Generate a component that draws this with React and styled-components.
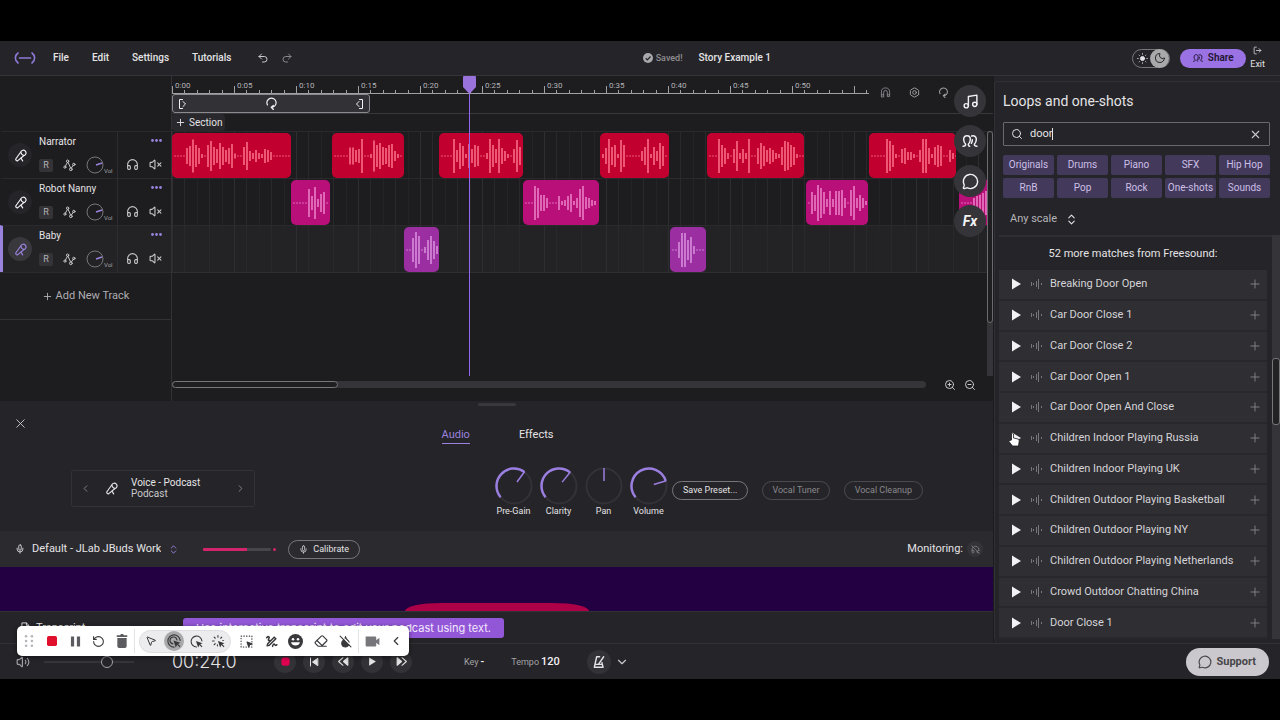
import React, { useState } from 'react';
import styled, { createGlobalStyle, css } from 'styled-components';
import {
  Bolt,
  ChevronDown,
  ChevronLeft,
  ChevronRight,
  ChevronsUpDown,
  DropletOff,
  Eraser,
  Headphones,
  HeadphoneOff,
  LogOut,
  MessageCircle,
  Mic,
  Moon,
  MousePointer2,
  Music,
  Plus,
  Redo2,
  RotateCcw,
  Search,
  Undo2,
  Volume2,
  VolumeX,
  X,
  ZoomIn,
  ZoomOut,
} from 'lucide-react';

const GlobalStyle = createGlobalStyle`
  * {
    box-sizing: border-box;
  }

  body {
    margin: 0;
    background: #000;
    color: #e4e3e6;
    font: 400 11px/14px Roboto, 'Liberation Sans', sans-serif;
  }

  button, input, select {
    margin: 0;
    padding: 0;
    border: 0;
    background: none;
    color: inherit;
    font: inherit;
    outline: none;
  }

  svg {
    display: block;
    flex-shrink: 0;
  }
`;

const Page = styled.div`
  display: flex;
  flex-direction: column;
  min-height: 100vh;
  padding: 41px 0;
  background: #000;
`;

const Studio = styled.div`
  position: relative;
  display: flex;
  flex: 1;
  flex-direction: column;
  background: #252428;
`;

const HiddenInput = styled.input`
  position: absolute;
  width: 1px;
  height: 1px;
  opacity: 0;
`;

/* top bar */

const TopBar = styled.header`
  display: flex;
  align-items: center;
  justify-content: space-between;
  height: 35px;
  padding: 0 15px 0 14px;
  border-bottom: 1px solid #353438;
`;

const Menu = styled.nav`
  display: flex;
  align-items: center;
  gap: 23px;
  font-size: 10px;
  font-weight: 500;
`;

const IconButton = styled.button`
  display: flex;
  align-items: center;
  justify-content: center;
  color: ${(props) => props.$color || '#c9c8cb'};
`;

const LogoLink = styled.a`
  margin-right: -6px;
`;

const MenuIcons = styled.div`
  display: flex;
  gap: 12px;
  margin-left: 3px;
`;

const Project = styled.div`
  display: flex;
  align-items: center;
  gap: 16px;
  margin-right: 12px;
  font-size: 10px;
  font-weight: 500;
`;

const Saved = styled.span`
  display: flex;
  align-items: center;
  gap: 3px;
  color: #8f8e92;
  font-size: 9px;
`;

const Account = styled.div`
  display: flex;
  align-items: center;
  justify-content: flex-end;
  gap: 10px;
`;

const ThemeSwitch = styled.label`
  display: flex;
  align-items: center;
  justify-content: space-between;
  width: 38px;
  height: 19px;
  padding-left: 4px;
  border: 1px solid #77767a;
  border-radius: 10px;
`;

const ThemeThumb = styled.span`
  display: flex;
  align-items: center;
  justify-content: center;
  width: 19px;
  height: 19px;
  border-radius: 50%;
  background: #a9a8ab;
  color: #252428;
`;

const ShareButton = styled.button`
  display: flex;
  align-items: center;
  justify-content: center;
  gap: 5px;
  width: 66px;
  height: 19px;
  border-radius: 10px;
  background: #9a72e4;
  color: #1e1430;
  font-size: 10px;
  font-weight: 600;
`;

const ExitLink = styled.a`
  display: flex;
  flex-direction: column;
  align-items: center;
  gap: 3px;
  margin-left: -6px;
  color: #e4e3e6;
  font-size: 9px;
  line-height: 12px;
  text-decoration: none;
`;

/* workspace */

const Workspace = styled.div`
  display: flex;
  flex: 1;
`;

const Editor = styled.main`
  display: flex;
  flex: 1;
  flex-direction: column;
  min-width: 0;
  border-right: 1px solid #1b1a1d;
`;

const Timeline = styled.section`
  display: flex;
  flex: 1;
  background: #1d1c1f;
`;

const HeadColumn = styled.div`
  flex: 0 0 172px;
  padding-top: 55px;
  border-right: 1px solid #323135;
`;

const rowBox = css`
  height: 47px;
  border-top: 1px solid #2a292c;
`;

const TrackHead = styled.div`
  ${rowBox}
  display: flex;
  align-items: stretch;
  border-left: 3px solid ${(props) => (props.$active ? '#9a83df' : 'transparent')};
  background: ${(props) => (props.$active ? '#232225' : 'transparent')};
`;

const TrackAvatar = styled.button`
  display: flex;
  align-self: center;
  align-items: center;
  justify-content: center;
  width: 24px;
  height: 24px;
  margin: 0 7px 0 5px;
  border-radius: 50%;
  background: ${(props) => (props.$active ? '#39383c' : '#252428')};
  color: ${(props) => (props.$active ? '#9a83df' : '#f2f1f4')};
`;

const TrackInfo = styled.div`
  flex: 1;
  padding-top: 3px;
  font-size: 10px;
`;

const TrackControls = styled.div`
  display: flex;
  align-items: center;
  gap: 10px;
  height: 18px;
  margin-top: 7px;
`;

const RecordArm = styled.button`
  width: 14px;
  height: 13px;
  border-radius: 2px;
  background: #343337;
  color: #b3b2b6;
  font-size: 9px;
  line-height: 13px;
`;

const VolLabel = styled.label`
  display: flex;
  align-items: flex-end;
  color: #a3a2a6;
  font-size: 6px;
  line-height: 6px;
`;

const TrackSide = styled.div`
  display: flex;
  flex: 0 0 54px;
  flex-direction: column;
  align-items: flex-end;
  padding: 7px 9px 0 8px;
  border-left: 1px solid #2d2c30;
`;

const TrackSideIcons = styled.div`
  display: flex;
  align-items: center;
  justify-content: space-between;
  width: 100%;
  height: 14px;
  margin-top: 15px;
`;

const AddTrack = styled.button`
  ${rowBox}
  display: flex;
  align-items: center;
  justify-content: center;
  gap: 3px;
  width: 100%;
  height: 48px;
  border-bottom: 1px solid #323135;
  color: #aeadb1;
  font-size: 11px;
`;

const LaneColumn = styled.div`
  position: relative;
  display: flex;
  flex: 1;
  flex-direction: column;
  min-width: 0;
`;

const RulerRow = styled.div`
  display: flex;
  height: 38px;
  border-bottom: 1px solid #38373b;
`;

const RulerBlock = styled.div`
  flex: 0 1 697px;
  min-width: 0;
`;

const Ruler = styled.div`
  display: flex;
  height: 18px;
  overflow: hidden;
  border-bottom: 1px solid #a09fa3;
`;

const Mark = styled.div`
  position: relative;
  display: flex;
  flex: 0 0 62px;
  align-items: flex-end;
`;

const MarkLabel = styled.span`
  position: absolute;
  top: 5px;
  left: 3px;
  color: #b5b4b8;
  font-size: 8px;
  line-height: 10px;
`;

const Tick = styled.span`
  flex: 1;
  height: ${(props) => (props.$major ? 7 : 3)}px;
  border-left: 1px solid #a09fa3;
`;

const LoopRange = styled.div`
  display: flex;
  align-items: center;
  justify-content: space-between;
  width: 198px;
  height: 19px;
  padding: 0 4px;
  border: 1px solid #8b8a8e;
  border-radius: 3px;
  background: #323135;
  color: #f2f1f4;
`;

const RulerTools = styled.div`
  display: flex;
  align-items: center;
  gap: 18px;
  height: 33px;
  padding-left: 11px;
`;

const SectionButton = styled.button`
  display: flex;
  align-self: flex-start;
  align-items: center;
  gap: 3px;
  height: 17px;
  padding: 0 3px;
  border-radius: 4px;
  background: #29282c;
  font-size: 10px;
`;

const Lanes = styled.div`
  display: flex;
  flex: 1;
`;

const LaneStack = styled.div`
  flex: 1;
  min-width: 0;
  overflow: hidden;
`;

const Lane = styled.div`
  ${rowBox}
  position: relative;
  background-color: ${(props) => (props.$active ? '#232225' : '#1d1c1f')};
  background-image: repeating-linear-gradient(
    90deg,
    #2e2d31 0 1px,
    transparent 1px 12px,
    #29282b 12px 13px,
    transparent 13px 25px,
    #242326 25px 26px,
    transparent 26px 37px,
    #29282b 37px 38px,
    transparent 38px 50px,
    #242326 50px 51px,
    transparent 51px 62px
  );

  &:last-child {
    height: 48px;
    border-bottom: 1px solid #2f2e32;
  }
`;

const Clip = styled.div`
  position: absolute;
  top: 1px;
  bottom: 0;
  display: flex;
  align-items: center;
  padding-left: 2px;
  overflow: hidden;
  border-radius: 5px;
  background: ${(props) => props.$fill};
  color: ${(props) => props.$wave};
`;

const VerticalScroll = styled.div`
  width: 6px;
  background: #353438;
`;

const VerticalThumb = styled.div`
  height: 192px;
  border: 1px solid #6c6b6f;
  border-radius: 3px;
  background: #1f1e21;
`;

const ScrollRow = styled.div`
  display: flex;
  align-items: center;
  height: 25px;
  padding-bottom: 8px;
  gap: 8px;
`;

const HorizontalScroll = styled.div`
  flex: 1;
  margin-right: 10px;
  border-radius: 4px;
  background: #353438;
`;

const HorizontalThumb = styled.div`
  width: 22%;
  height: 7px;
  border: 1px solid #77767a;
  border-radius: 4px;
  background: #1f1e21;
`;

const ZoomButtons = styled.div`
  display: flex;
  gap: 8px;
  margin-right: 17px;
`;

const Playhead = styled.div`
  position: absolute;
  top: 0;
  bottom: 25px;
  display: flex;
  flex-direction: column;
  align-items: center;
  width: 13px;

  &::after {
    content: '';
    flex: 1;
    width: 1px;
    background: #9068ee;
  }
`;

const Dock = styled.div`
  position: absolute;
  top: 9px;
  right: 7px;
  display: flex;
  flex-direction: column;
  gap: 8px;
`;

const DockButton = styled.button`
  display: flex;
  align-items: center;
  justify-content: center;
  width: 32px;
  height: 32px;
  border-radius: 50%;
  background: #353438;
  color: #f2f1f4;
  font-size: 14px;
  font-style: italic;
  font-weight: 700;
`;

/* track settings */

const TrackPanel = styled.section`
  height: 130px;
`;

const Handle = styled.div`
  width: 38px;
  height: 3px;
  margin: 2px auto 0;
  border-radius: 2px;
  background: #39383c;
`;

const TabRow = styled.div`
  display: grid;
  grid-template-columns: 1fr auto 1fr;
  align-items: start;
  padding: 10px 11px 0 13px;
`;

const Tabs = styled.div`
  display: flex;
  gap: 49px;
  margin-top: 11px;
`;

const Tab = styled.button`
  height: 17px;
  border-bottom: 1px solid ${(props) => (props.$active ? '#9a83df' : 'transparent')};
  color: ${(props) => (props.$active ? '#9a83df' : '#e4e3e6')};
`;

const ControlsRow = styled.div`
  display: flex;
  align-items: center;
  height: 54px;
  margin-top: 17px;
  padding-left: 71px;
`;

const Preset = styled.div`
  display: flex;
  align-items: center;
  width: 184px;
  height: 37px;
  margin-right: 236px;
  padding: 0 8px;
  border: 1px solid #323135;
  border-radius: 2px;
  font-size: 10px;
  line-height: 11px;
`;

const PresetName = styled.div`
  flex: 1;
  margin-left: 13px;

  div:last-child {
    color: #c9c8cb;
  }
`;

const PresetIcon = styled.div`
  margin-left: 14px;
`;

const Knob = styled.label`
  display: flex;
  flex-direction: column;
  align-items: center;
  width: 45px;
  margin-top: 8px;
  font-size: 9px;
  line-height: 12px;
`;

const PillRow = styled.div`
  display: flex;
  gap: 14px;
  margin: 4px 0 0 1px;
`;

const Pill = styled.button`
  display: flex;
  align-items: center;
  gap: 5px;
  height: 19px;
  padding: 0 ${(props) => (props.$wide ? 10 : 9)}px;
  border: 1px solid ${(props) => (props.$muted ? '#4b4a4e' : '#77767a')};
  border-radius: 10px;
  color: ${(props) => (props.$muted ? '#89888c' : '#e4e3e6')};
  font-size: 9px;
  white-space: nowrap;
`;

const MicBar = styled.section`
  display: flex;
  align-items: center;
  height: 36px;
  padding: 0 10px 0 15px;
  background: #2b2a2e;
`;

const Device = styled.label`
  display: flex;
  align-items: center;
  gap: 7px;
  margin-right: 24px;
`;

const PlainSelect = styled.select`
  appearance: none;
  field-sizing: content;
`;

const Level = styled.div`
  display: flex;
  align-items: center;
  width: 73px;
  gap: 2px;
  margin-right: 12px;
`;

const LevelTrack = styled.div`
  flex: 1;
  height: 3px;
  border-radius: 1px;
  background: linear-gradient(90deg, #d4246b 64%, #47464a 64%);
`;

const LevelPeak = styled.span`
  width: 3px;
  height: 3px;
  border-radius: 50%;
  background: #d4246b;
`;

const Monitoring = styled.div`
  display: flex;
  align-items: center;
  gap: 4px;
  margin-left: auto;
`;

const MonitorButton = styled(IconButton)`
  width: 16px;
  height: 16px;
  border-radius: 50%;
  background: #343337;
`;

const VideoStrip = styled.div`
  display: flex;
  align-items: flex-end;
  justify-content: center;
  height: 44px;
  background: #230041;
`;

const VideoShape = styled.div`
  width: 184px;
  height: 8px;
  border-radius: 36px 36px 0 0 / 8px 8px 0 0;
  background: #ad0046;
`;

const TranscriptRow = styled.section`
  display: flex;
  align-items: center;
  height: 32px;
  padding-left: 20px;
  border-top: 1px solid #323135;
`;

const TranscriptTab = styled.button`
  display: flex;
  align-items: center;
  gap: 5px;
  width: 163px;
`;

const Banner = styled.p`
  margin: 1px 0 0;
  padding: 3px 13px;
  border-radius: 3px;
  background: #9257d6;
  color: #f2e8ff;
  font-family: Inter, sans-serif;
`;

/* library */

const Library = styled.aside`
  display: flex;
  flex: 0 0 286px;
  flex-direction: column;
  align-self: stretch;
  margin: 5px 0 4px;
  border: 1px solid #313034;
  border-width: 1px 0 0 1px;
  border-radius: 3px 0 0 0;
`;

const LibraryTop = styled.div`
  padding: 11px 10px 0 8px;
`;

const LibraryTitle = styled.h2`
  margin: 0 0 13px;
  font-size: 14px;
  font-weight: 400;
  line-height: 16px;
`;

const SearchBox = styled.label`
  display: flex;
  align-items: center;
  height: 24px;
  padding: 0 7px;
  border: 1px solid #69686c;
  border-radius: 1px;
`;

const SearchInput = styled.input`
  field-sizing: content;
  margin-left: 7px;
`;

const Caret = styled.span`
  width: 1px;
  height: 12px;
  margin-right: auto;
  background: #e4e3e6;
`;

const Tags = styled.div`
  display: grid;
  grid-template-columns: repeat(5, 1fr);
  gap: 3px;
  margin-top: 9px;
`;

const Tag = styled.button`
  height: 20px;
  border-radius: 2px;
  background: #433a5b;
  color: #cdbfe8;
  font-size: 10px;
  white-space: nowrap;
`;

const Scale = styled.label`
  display: flex;
  align-items: center;
  gap: 8px;
  height: 32px;
  margin-top: 5px;
  padding-left: 7px;
  color: #b5b4b8;
`;

const Results = styled.div`
  display: flex;
  flex: 1;
  margin-left: 4px;
`;

const ResultsBody = styled.div`
  display: flex;
  flex: 1;
  flex-direction: column;
  border-top: 2px solid #2f2e32;
`;

const ResultsTitle = styled.h3`
  margin: 0;
  padding: 10px 5px 9px 0;
  font-size: 11px;
  font-weight: 400;
  line-height: 14px;
  text-align: center;
`;

const ResultList = styled.ul`
  display: flex;
  flex: 1;
  flex-direction: column;
  margin: 0 5px 0 0;
  padding: 0;
  list-style: none;
`;

const ResultRow = styled.li`
  position: relative;
  display: flex;
  flex: 1;
  align-items: center;
  padding: 0 5px 0 13px;
  border-bottom: 2px solid #28272b;
  background: #2f2e32;
  color: #d5d4d8;
`;

const ResultName = styled.span`
  flex: 1;
  margin-left: 8px;
  white-space: nowrap;
`;

const ResultWave = styled.span`
  margin-left: 10px;
`;

const HandCursor = styled.svg`
  position: absolute;
  top: 8px;
  left: 9px;
`;

const LibraryScroll = styled.div`
  display: flex;
  flex-direction: column;
  align-items: stretch;
  width: 8px;
  background: #353438;
`;

const LibraryThumb = styled.div`
  height: 67px;
  margin-top: 123px;
  border: 1px solid #77767a;
  border-radius: 3px;
  background: #222124;
`;

/* transport */

const Transport = styled.footer`
  display: flex;
  align-items: center;
  height: 36px;
  padding: 0 11px 0 16px;
  border-top: 1px solid #323135;
`;

const VolumeSlider = styled.input`
  appearance: none;
  width: 90px;
  height: 12px;
  margin: 0 38px 0 14px;

  &::-webkit-slider-runnable-track {
    height: 2px;
    background: #353438;
  }

  &::-webkit-slider-thumb {
    appearance: none;
    width: 12px;
    height: 12px;
    margin-top: -5px;
    border: 1px solid #a3a2a6;
    border-radius: 50%;
    background: #252428;
  }
`;

const Clock = styled.time`
  width: 102px;
  font: 300 18px/22px Inter, sans-serif;
`;

const TransportButtons = styled.div`
  display: flex;
  gap: 7px;
  margin-right: 52px;
`;

const RoundButton = styled.button`
  display: flex;
  align-items: center;
  justify-content: center;
  width: ${(props) => props.$size || 22}px;
  height: ${(props) => props.$size || 22}px;
  border-radius: 50%;
  background: #333236;
  color: #e4e3e6;
`;

const Setting = styled.label`
  display: flex;
  align-items: center;
  gap: 2px;
  margin-right: 27px;
  color: #a3a2a6;
  font-size: 9px;

  input, output {
    color: #f2f1f4;
    font-size: 11px;
    font-weight: 500;
    field-sizing: content;
  }
`;

const Support = styled.button`
  display: flex;
  align-items: center;
  gap: 4px;
  height: 28px;
  margin-left: auto;
  padding: 0 13px 0 12px;
  border-radius: 14px;
  background: #cac8cc;
  color: #47464a;
  font: 700 11px/14px Roboto, sans-serif;
`;

/* floating recorder */

const Recorder = styled.div`
  position: absolute;
  bottom: 23px;
  left: 17px;
  display: flex;
  align-items: center;
  width: 392px;
  height: 30px;
  border-radius: 5px;
  background: #fff;
  color: #39383c;
  box-shadow: 0 1px 4px rgba(0, 0, 0, 0.5);
`;

const RecorderButton = styled.button`
  display: flex;
  flex: 1;
  align-items: center;
  justify-content: center;
  height: 20px;
  color: ${(props) => props.$color || '#39383c'};
`;

const RecorderGroup = styled.div`
  display: flex;
  flex: ${(props) => props.$grow};
  align-items: center;
  padding: 0 ${(props) => props.$pad || 0}px;
`;

const PointerGroup = styled.div`
  display: flex;
  align-items: center;
  width: 92px;
  height: 23px;
  margin: 0 3px 0 4px;
  border: 1px solid #dddce0;
  border-radius: 12px;
  background: #ececee;
`;

const Selected = styled.span`
  display: flex;
  align-items: center;
  justify-content: center;
  width: 20px;
  height: 20px;
  border-radius: 50%;
  background: #a9a8ab;
`;

const RecorderDivider = styled.span`
  width: 1px;
  height: 24px;
  background: #e3e2e5;
`;

/* icons */

const Svg = ({ size = 14, stroke = 2, fill = 'none', children }) => (
  <svg
    width={size}
    height={size}
    viewBox="0 0 24 24"
    fill={fill}
    stroke="currentColor"
    strokeWidth={stroke}
    strokeLinecap="round"
    strokeLinejoin="round"
    aria-hidden="true"
  >
    {children}
  </svg>
);

const LogoIcon = () => (
  <svg width="22" height="12" viewBox="0 0 22 12" fill="none" stroke="#8f79d8" strokeWidth="1.6" strokeLinecap="round" aria-hidden="true">
    <path d="M4 1C0.5 3.5 0.500 8.5 4 11M18 1c3.500 2.500 3.500 7.500 0 10M5.500 6h11" />
  </svg>
);

const VocalIcon = ({ size }) => (
  <Svg size={size} stroke={2.200}>
    <path d="M12.500 5.500a5 5 0 1 1 6 6.500L7 21.500c-2 1-4.500-1-3.500-3.500z" />
    <path d="M12.500 5.500c.5 3.500 2.500 5.500 6 6.500M13 17l3 5" />
  </Svg>
);

const PeopleIcon = ({ size }) => (
  <Svg size={size} stroke={2.200}>
    <path d="M1.500 20c2.500 0 4-1 4-3C3.500 15 2.500 12.500 2.500 9.500 2.500 6 4.500 4 7.500 4s5 2 5 5.500c0 3-1 5.500-3 7.500 0 1.500.5 3 2 3" />
    <path d="M14.500 4.500c4-1.500 7 1 7 5 0 3-1 5.500-3 7.500 0 2 1.500 3 4 3M15.500 10c0 2.500-.5 4-1.500 5.500" />
  </Svg>
);

const AutomationIcon = () => (
  <Svg size={13} stroke={1.800}>
    <circle cx="3.500" cy="15" r="2" />
    <circle cx="8.500" cy="4" r="2.200" />
    <circle cx="14.500" cy="19" r="2.500" />
    <circle cx="20" cy="10" r="2.200" />
    <path d="M4.500 13L8 6.500M9.500 6.500L14 16.500M15.500 16.500l3.500-5" />
  </Svg>
);

const LoopIcon = ({ size }) => (
  <Svg size={size} stroke={2.200}>
    <path d="M4.500 14.500A8.500 8.500 0 1 1 12.500 19M15.500 15.500l-4 3.500 4 4" />
  </Svg>
);

const MagnetIcon = () => (
  <Svg size={11}>
    <path d="M3 21V11a9 9 0 0 1 18 0v10h-5V11.500a4 4 0 0 0-8 0V21zM3 17h5M16 17h5" />
  </Svg>
);

const RangeStartIcon = () => (
  <Svg size={12}>
    <path d="M11 3H5v18h6M12 7l5 5-5 5" />
  </Svg>
);

const RangeEndIcon = () => (
  <Svg size={12}>
    <path d="M13 3h6v18h-6M12 7l-5 5 5 5" />
  </Svg>
);

const SavedIcon = () => (
  <svg width="10" height="10" viewBox="0 0 24 24" aria-hidden="true">
    <circle cx="12" cy="12" r="12" fill="#a9a8ab" />
    <path d="M6.500 12.500l4 4 7.500-8" fill="none" stroke="#252428" strokeWidth="3" />
  </svg>
);

const SunIcon = () => (
  <Svg size={11}>
    <circle cx="12" cy="12" r="4.500" fill="currentColor" />
    <path d="M12 1.500v1M12 21.500v1M1.500 12h1M21.500 12h1M4.600 4.600l.6.6M18.800 18.800l.6.6M4.600 19.400l.6-.6M18.800 5.200l.6-.6" />
  </Svg>
);

const DotsIcon = () => (
  <svg width="11" height="3" viewBox="0 0 11 3" fill="#9a83df" aria-hidden="true">
    <circle cx="1.500" cy="1.500" r="1.400" />
    <circle cx="5.500" cy="1.500" r="1.400" />
    <circle cx="9.500" cy="1.500" r="1.400" />
  </svg>
);

const PlayIcon = ({ width = 9, height = 12 }) => (
  <svg width={width} height={height} viewBox="0 0 9 12" fill="currentColor" aria-hidden="true">
    <path d="M0 0.500L9 6 0 11.500z" />
  </svg>
);

const SoundIcon = () => (
  <svg width="11" height="12" viewBox="0 0 11 12" stroke="#77767a" aria-hidden="true">
    <path d="M.5 4v4M2.500 5v2M5.500 3v6M7.500 1v10M10.500 5v2" />
  </svg>
);

const MetronomeIcon = () => (
  <Svg size={14} stroke={2.400}>
    <path d="M13 3H8L4 21h15l-2-8M6 16h11M11 16L20 3" />
  </Svg>
);

const pointer = 'M11 11l4 12 2.500-4.500 4 4 1.500-1.500-4-4 4-2z';

const VolDial = () => (
  <svg width="18" height="18" viewBox="0 0 18 18" fill="none" aria-hidden="true">
    <circle cx="9" cy="9" r="8" stroke="#77767a" />
    <path d="M10 9l6-2" stroke="#9a83df" strokeWidth="1.500" />
  </svg>
);

/* sweep runs clockwise from the lower left, 0 to 1 */
const KnobDial = ({ value, centered }) => {
  const at = (t, r) => {
    const a = ((-130 + t * 260) * Math.PI) / 180;
    return `${19 + r * Math.sin(a)} ${19 - r * Math.cos(a)}`;
  };
  return (
    <svg width="38" height="38" viewBox="0 0 38 38" fill="none" aria-hidden="true">
      <circle cx="19" cy="19" r="17.500" stroke="#333236" strokeWidth="2" />
      {!centered && (
        <path
          d={`M${at(0, 17.5)}A17.500 17.500 0 ${value * 260 > 180 ? 1 : 0} 1 ${at(value, 17.5)}`}
          stroke="#9a7ee0"
          strokeWidth="2.500"
        />
      )}
      <path d={`M${at(value, 5)}L${at(value, 18)}`} stroke="#9a7ee0" strokeWidth="1.500" />
    </svg>
  );
};

const Waveform = ({ bars }) => (
  <svg width={bars.length * 3} height="40" stroke="currentColor" strokeWidth="1.400" aria-hidden="true">
    {bars.map((h, i) => (
      <path key={i} d={`M${i * 3 + 1} ${20 - h / 2}v${h}`} />
    ))}
  </svg>
);

const marks = ['0:00', '0:05', '0:10', '0:15', '0:20', '0:25', '0:30', '0:35', '0:40', '0:45', '0:50', ''];

const tracks = [
  {
    name: 'Narrator',
    fill: '#c20030',
    wave: '#ff7d92',
    clips: [
      { x: 0, w: 119, bars: [1, 1, 1, 1, 16, 20, 33, 22, 16, 4, 1, 22, 30, 18, 14, 26, 18, 12, 16, 24, 5, 1, 1, 18, 28, 10, 6, 12, 6, 4, 14, 12, 8, 1, 1, 1, 1, 1, 1] },
      { x: 160, w: 72, bars: [1, 1, 1, 1, 1, 17, 17, 12, 14, 34, 1, 1, 4, 31, 22, 26, 18, 16, 22, 24, 10, 4, 1] },
      { x: 267, w: 84, bars: [1, 1, 1, 1, 34, 12, 26, 20, 4, 24, 14, 22, 20, 1, 1, 6, 34, 22, 14, 34, 16, 10, 4, 1, 14, 32, 18] },
      { x: 428, w: 69, bars: [4, 16, 34, 18, 22, 4, 32, 22, 1, 1, 1, 1, 1, 10, 18, 34, 4, 18, 10, 26, 20, 1] },
      { x: 535, w: 97, bars: [1, 1, 1, 34, 22, 16, 6, 1, 14, 30, 6, 14, 6, 34, 1, 1, 16, 26, 20, 12, 16, 12, 6, 4, 18, 30, 28, 22, 18, 4, 1, 1] },
      { x: 697, w: 87, bars: [1, 1, 1, 1, 1, 34, 30, 22, 4, 1, 14, 16, 8, 8, 4, 1, 12, 34, 34, 16, 4, 18, 22, 20, 1, 1, 12, 6, 1] },
    ],
  },
  {
    name: 'Robot Nanny',
    fill: '#b80f79',
    wave: '#f08fd0',
    clips: [
      { x: 119, w: 39, bars: [1, 1, 1, 1, 1, 28, 14, 32, 8, 18, 22, 1] },
      { x: 351, w: 76, bars: [1, 1, 1, 34, 30, 16, 16, 10, 1, 1, 1, 14, 4, 6, 14, 18, 4, 10, 28, 34, 12, 10, 6, 4] },
      { x: 634, w: 62, bars: [1, 22, 16, 36, 30, 22, 8, 24, 8, 24, 24, 26, 10, 1, 26, 34, 10, 16, 10, 4] },
      { x: 787, w: 40, bars: [1, 1, 1, 1, 10, 14, 16, 20, 24] },
    ],
  },
  {
    name: 'Baby',
    active: true,
    fill: '#9b2fa1',
    wave: '#e09ae4',
    clips: [
      { x: 232, w: 35, bars: [1, 1, 24, 36, 28, 1, 6, 20, 28, 18, 8] },
      { x: 498, w: 36, bars: [1, 1, 16, 34, 34, 20, 26, 8, 1, 1, 1] },
    ],
  },
];

const tags = ['Originals', 'Drums', 'Piano', 'SFX', 'Hip Hop', 'RnB', 'Pop', 'Rock', 'One-shots', 'Sounds'];

const sounds = [
  'Breaking Door Open',
  'Car Door Close 1',
  'Car Door Close 2',
  'Car Door Open 1',
  'Car Door Open And Close',
  'Children Indoor Playing Russia',
  'Children Indoor Playing UK',
  'Children Outdoor Playing Basketball',
  'Children Outdoor Playing NY',
  'Children Outdoor Playing Netherlands',
  'Crowd Outdoor Chatting China',
  'Door Close 1',
];

const knobs = [
  { label: 'Pre-Gain', value: 0.64 },
  { label: 'Clarity', value: 0.65 },
  { label: 'Pan', value: 0.5, centered: true },
  { label: 'Volume', value: 0.78 },
];

const Header = () => (
  <TopBar>
    <Menu>
      <LogoLink href="#home" aria-label="Home"><LogoIcon /></LogoLink>
      <button type="button">File</button>
      <button type="button">Edit</button>
      <button type="button">Settings</button>
      <button type="button">Tutorials</button>
      <MenuIcons>
        <IconButton aria-label="Undo"><Undo2 size={12} /></IconButton>
        <IconButton $color="#89888c" aria-label="Redo"><Redo2 size={12} /></IconButton>
      </MenuIcons>
    </Menu>
    <Project>
      <Saved>
        <SavedIcon />
        Saved!
      </Saved>
      Story Example 1
    </Project>
    <Account>
      <ThemeSwitch>
        <HiddenInput type="checkbox" defaultChecked aria-label="Dark theme" />
        <SunIcon />
        <ThemeThumb><Moon size={12} /></ThemeThumb>
      </ThemeSwitch>
      <ShareButton type="button">
        <PeopleIcon size={10} />
        Share
      </ShareButton>
      <ExitLink href="#exit">
        <LogOut size={9} />
        Exit
      </ExitLink>
    </Account>
  </TopBar>
);

const TrackHeader = ({ name, active }) => (
  <TrackHead $active={active}>
    <TrackAvatar $active={active} aria-label={`${name} voice`}>
      <VocalIcon size={13} />
    </TrackAvatar>
    <TrackInfo>
      {name}
      <TrackControls>
        <RecordArm type="button">R</RecordArm>
        <IconButton aria-label="Automation"><AutomationIcon /></IconButton>
        <VolLabel>
          <HiddenInput type="range" defaultValue="80" />
          <VolDial />
          Vol
        </VolLabel>
      </TrackControls>
    </TrackInfo>
    <TrackSide>
      <IconButton aria-label="Track options"><DotsIcon /></IconButton>
      <TrackSideIcons>
        <IconButton aria-label="Solo"><Headphones size={13} /></IconButton>
        <IconButton aria-label="Mute"><VolumeX size={13} /></IconButton>
      </TrackSideIcons>
    </TrackSide>
  </TrackHead>
);

const TimelineSection = () => (
  <Timeline>
    <HeadColumn>
      {tracks.map((track) => (
        <TrackHeader key={track.name} name={track.name} active={track.active} />
      ))}
      <AddTrack type="button">
        <Plus size={11} />
        Add New Track
      </AddTrack>
    </HeadColumn>
    <LaneColumn>
      <RulerRow>
        <RulerBlock>
          <Ruler>
            {marks.map((mark) => (
              <Mark key={mark}>
                <MarkLabel>{mark}</MarkLabel>
                <Tick $major />
                <Tick />
                <Tick />
                <Tick />
                <Tick />
              </Mark>
            ))}
          </Ruler>
          <LoopRange>
            <RangeStartIcon />
            <LoopIcon size={13} />
            <RangeEndIcon />
          </LoopRange>
        </RulerBlock>
        <RulerTools>
          <IconButton $color="#89888c" aria-label="Snap"><MagnetIcon /></IconButton>
          <IconButton $color="#a3a2a6" aria-label="Grid settings"><Bolt size={11} /></IconButton>
          <IconButton $color="#a3a2a6" aria-label="Loop"><LoopIcon size={11} /></IconButton>
        </RulerTools>
      </RulerRow>
      <SectionButton type="button">
        <Plus size={11} />
        Section
      </SectionButton>
      <Lanes>
        <LaneStack>
          {tracks.map((track) => (
            <Lane key={track.name} $active={track.active}>
              {track.clips.map(({ x, w, bars }) => (
                <Clip key={x} $fill={track.fill} $wave={track.wave} style={{ left: x, width: w }}>
                  <Waveform bars={bars} />
                </Clip>
              ))}
            </Lane>
          ))}
        </LaneStack>
        <VerticalScroll>
          <VerticalThumb />
        </VerticalScroll>
      </Lanes>
      <ScrollRow>
        <HorizontalScroll>
          <HorizontalThumb />
        </HorizontalScroll>
        <ZoomButtons>
          <IconButton aria-label="Zoom in"><ZoomIn size={12} /></IconButton>
          <IconButton aria-label="Zoom out"><ZoomOut size={12} /></IconButton>
        </ZoomButtons>
      </ScrollRow>
      <Playhead style={{ left: 291 }}>
        <svg width="13" height="18" viewBox="0 0 13 18" fill="#9a72dc" aria-hidden="true">
          <path d="M1 0h11q1 0 1 1v10L6.500 18 0 11V1q0-1 1-1z" />
        </svg>
      </Playhead>
      <Dock>
        <DockButton aria-label="Loops"><Music size={17} /></DockButton>
        <DockButton aria-label="Collaborators"><PeopleIcon size={16} /></DockButton>
        <DockButton aria-label="Comments"><MessageCircle size={17} /></DockButton>
        <DockButton type="button">Fx</DockButton>
      </Dock>
    </LaneColumn>
  </Timeline>
);

const SettingsPanel = () => {
  const [tab, setTab] = useState('Audio');

  return (
    <TrackPanel>
      <Handle />
      <TabRow>
        <IconButton aria-label="Close panel" style={{ justifySelf: 'start' }}>
          <X size={15} strokeWidth={1.500} />
        </IconButton>
        <Tabs>
          {['Audio', 'Effects'].map((name) => (
            <Tab key={name} type="button" $active={tab === name} onClick={() => setTab(name)}>
              {name}
            </Tab>
          ))}
        </Tabs>
      </TabRow>
      <ControlsRow>
        <Preset>
          <IconButton $color="#89888c" aria-label="Previous preset"><ChevronLeft size={11} /></IconButton>
          <PresetIcon><VocalIcon size={13} /></PresetIcon>
          <PresetName>
            <div>Voice - Podcast</div>
            <div>Podcast</div>
          </PresetName>
          <IconButton $color="#89888c" aria-label="Next preset"><ChevronRight size={11} /></IconButton>
        </Preset>
        {knobs.map(({ label, value, centered }) => (
          <Knob key={label}>
            <HiddenInput type="range" defaultValue={value * 100} />
            <KnobDial value={value} centered={centered} />
            {label}
          </Knob>
        ))}
        <PillRow>
          <Pill type="button" $wide>Save Preset...</Pill>
          <Pill type="button" $muted>Vocal Tuner</Pill>
          <Pill type="button" $muted $wide>Vocal Cleanup</Pill>
        </PillRow>
      </ControlsRow>
    </TrackPanel>
  );
};

const MicSection = () => (
  <MicBar>
    <Device>
      <Mic size={10} />
      <PlainSelect aria-label="Microphone">
        <option>Default - JLab JBuds Work</option>
      </PlainSelect>
      <ChevronsUpDown size={11} color="#9a83df" />
    </Device>
    <Level>
      <LevelTrack />
      <LevelPeak />
    </Level>
    <Pill type="button" $wide>
      <Mic size={9} />
      Calibrate
    </Pill>
    <Monitoring>
      Monitoring:
      <MonitorButton $color="#89888c" aria-label="Monitoring"><HeadphoneOff size={9} /></MonitorButton>
    </Monitoring>
  </MicBar>
);

const LibraryPanel = () => {
  const [query, setQuery] = useState('door');

  return (
    <Library>
      <LibraryTop>
        <LibraryTitle>Loops and one-shots</LibraryTitle>
        <SearchBox>
          <Search size={12} />
          <SearchInput aria-label="Search sounds" value={query} onChange={(ev) => setQuery(ev.target.value)} />
          <Caret />
          <IconButton aria-label="Clear search" onClick={() => setQuery('')}><X size={13} /></IconButton>
        </SearchBox>
        <Tags>
          {tags.map((tag) => (
            <Tag key={tag} type="button">{tag}</Tag>
          ))}
        </Tags>
        <Scale>
          <PlainSelect aria-label="Scale">
            <option>Any scale</option>
          </PlainSelect>
          <ChevronsUpDown size={13} color="#e4e3e6" />
        </Scale>
      </LibraryTop>
      <Results>
        <ResultsBody>
          <ResultsTitle>52 more matches from Freesound:</ResultsTitle>
          <ResultList>
            {sounds.map((sound, index) => (
              <ResultRow key={sound}>
                <IconButton $color="#f2f1f4" aria-label={`Play ${sound}`}><PlayIcon /></IconButton>
                <ResultWave><SoundIcon /></ResultWave>
                <ResultName>{sound}</ResultName>
                <IconButton $color="#89888c" aria-label={`Add ${sound}`}><Plus size={14} strokeWidth={1.500} /></IconButton>
                {index === 5 && (
                  <HandCursor width="12" height="15" viewBox="0 0 12 15" fill="#fff" stroke="#1b1a1d" strokeWidth="0.800">
                    <path d="M3.500 8V2q1-1.500 2 0v4l4.500 1q1.500.5 1.200 2L10.500 14H4.500L1 9.500q0-1.500 1.500-1z" />
                  </HandCursor>
                )}
              </ResultRow>
            ))}
          </ResultList>
        </ResultsBody>
        <LibraryScroll>
          <LibraryThumb />
        </LibraryScroll>
      </Results>
    </Library>
  );
};

const TransportBar = () => (
  <Transport>
    <IconButton $color="#a3a2a6" aria-label="Master volume"><Volume2 size={14} /></IconButton>
    <VolumeSlider type="range" defaultValue="73" aria-label="Volume" />
    <Clock>00:24.0</Clock>
    <TransportButtons>
      <RoundButton aria-label="Record">
        <Svg size={9}><rect x="1" y="1" width="22" height="22" rx="7" fill="#e00050" stroke="none" /></Svg>
      </RoundButton>
      <RoundButton aria-label="To start">
        <Svg size={12} fill="currentColor"><path d="M5 4v16M19 5L9 12l10 7z" /></Svg>
      </RoundButton>
      <RoundButton aria-label="Rewind">
        <Svg size={13}><path d="M11 5l-8 7 8 7" /><path d="M20 5l-8 7 8 7z" fill="currentColor" /></Svg>
      </RoundButton>
      <RoundButton aria-label="Play"><PlayIcon width={7} height={9} /></RoundButton>
      <RoundButton aria-label="Forward">
        <Svg size={13}><path d="M13 5l8 7-8 7" /><path d="M4 5l8 7-8 7z" fill="currentColor" /></Svg>
      </RoundButton>
    </TransportButtons>
    <Setting>
      Key
      <output>-</output>
    </Setting>
    <Setting>
      Tempo
      <input defaultValue="120" />
    </Setting>
    <RoundButton $size={24} aria-label="Metronome"><MetronomeIcon /></RoundButton>
    <IconButton aria-label="Metronome options" style={{ marginLeft: 4 }}><ChevronDown size={14} /></IconButton>
    <Support type="button">
      <MessageCircle size={14} />
      Support
    </Support>
  </Transport>
);

const RecorderBar = () => (
  <Recorder>
    <RecorderGroup $grow="0 0 117px">
      <RecorderButton $color="#b5b4b8" aria-label="Move">
        <Svg size={14} stroke={0} fill="currentColor">
          {[4, 12, 20].map((y) => (
            <React.Fragment key={y}>
              <circle cx="7" cy={y} r="2.200" />
              <circle cx="17" cy={y} r="2.200" />
            </React.Fragment>
          ))}
        </Svg>
      </RecorderButton>
      <RecorderButton $color="#e0102c" aria-label="Stop">
        <Svg size={10} stroke={0} fill="currentColor"><rect width="24" height="24" rx="4" /></Svg>
      </RecorderButton>
      <RecorderButton $color="#5c5b5f" aria-label="Pause">
        <Svg size={11} stroke={0} fill="currentColor"><path d="M2 1h7v22H2zM15 1h7v22h-7z" /></Svg>
      </RecorderButton>
      <RecorderButton aria-label="Restart"><RotateCcw size={13} /></RecorderButton>
      <RecorderButton $color="#5c5b5f" aria-label="Delete">
        <Svg size={14} stroke={0} fill="currentColor"><path d="M3 2h6l1-2h4l1 2h6v3H3zM4 7h16v14q0 3-3 3H7q-3 0-3-3z" /></Svg>
      </RecorderButton>
    </RecorderGroup>
    <RecorderDivider />
    <PointerGroup>
      <RecorderButton aria-label="Pointer"><MousePointer2 size={12} /></RecorderButton>
      <RecorderButton aria-label="Highlight">
        <Selected>
          <Svg size={14}>
            <path d="M12 22.500A10.500 10.500 0 1 1 22.500 11M10 17a6 6 0 1 1 7-7" />
            <path d={pointer} fill="currentColor" stroke="none" />
          </Svg>
        </Selected>
      </RecorderButton>
      <RecorderButton aria-label="Spotlight">
        <Svg size={13}>
          <path d="M12 22A10 10 0 1 1 22 11" />
          <path d={pointer} fill="currentColor" stroke="none" />
        </Svg>
      </RecorderButton>
      <RecorderButton aria-label="Click effect">
        <Svg size={13}>
          <path d="M11 1v3M4 4l2 2M1 11h3M18 4l-2 2M4 18l2-2M10 18v2M20 10h1" />
          <path d={pointer} fill="currentColor" stroke="none" />
        </Svg>
      </RecorderButton>
    </PointerGroup>
    <RecorderGroup $grow="0 0 124px">
      <RecorderButton aria-label="Select area">
        <Svg size={13}>
          <rect x="2" y="2" width="20" height="20" strokeDasharray="1 4" />
          <path d="M13 13l3 9 2-4 4-2z" fill="currentColor" />
        </Svg>
      </RecorderButton>
      <RecorderButton aria-label="Draw">
        <Svg size={13}>
          <path d="M4 20l1-4L17 4l3 3L8 19zM3 5c4-4 6-1 4 2s0 4 2 3M14 21c1-5 3-5 4-3s2 1 4 0" strokeWidth="2.800" />
        </Svg>
      </RecorderButton>
      <RecorderButton aria-label="Sticker">
        <Svg size={15} stroke={0}>
          <circle cx="12" cy="12" r="12" fill="currentColor" />
          <circle cx="8" cy="8.500" r="2" fill="#fff" />
          <circle cx="16" cy="8.500" r="2" fill="#fff" />
          <path d="M5 13h14c-1 7-13 7-14 0z" fill="#fff" />
        </Svg>
      </RecorderButton>
      <RecorderButton aria-label="Erase"><Eraser size={14} /></RecorderButton>
      <RecorderButton aria-label="Blur"><DropletOff size={13} fill="currentColor" /></RecorderButton>
    </RecorderGroup>
    <RecorderDivider />
    <RecorderGroup $grow="1" $pad={1}>
      <RecorderButton $color="#77767a" aria-label="Camera">
        <Svg size={15} stroke={0} fill="currentColor"><path d="M1 4h15q2 0 2 2v4l5-4v12l-5-4v4q0 2-2 2H3q-2 0-2-2z" /></Svg>
      </RecorderButton>
      <RecorderButton aria-label="Collapse"><ChevronLeft size={14} /></RecorderButton>
    </RecorderGroup>
  </Recorder>
);

export default () => (
  <Page>
    <GlobalStyle />
    <Studio>
      <Header />
      <Workspace>
        <Editor>
          <TimelineSection />
          <SettingsPanel />
          <MicSection />
          <VideoStrip>
            <VideoShape />
          </VideoStrip>
          <TranscriptRow>
            <TranscriptTab type="button">
              <Svg size={11}><path d="M5 2h9l5 5v15H5zM14 2v6h5" /></Svg>
              Transcript
            </TranscriptTab>
            <Banner>Use interactive transcript to edit your podcast using text.</Banner>
          </TranscriptRow>
        </Editor>
        <LibraryPanel />
      </Workspace>
      <TransportBar />
      <RecorderBar />
    </Studio>
  </Page>
);
